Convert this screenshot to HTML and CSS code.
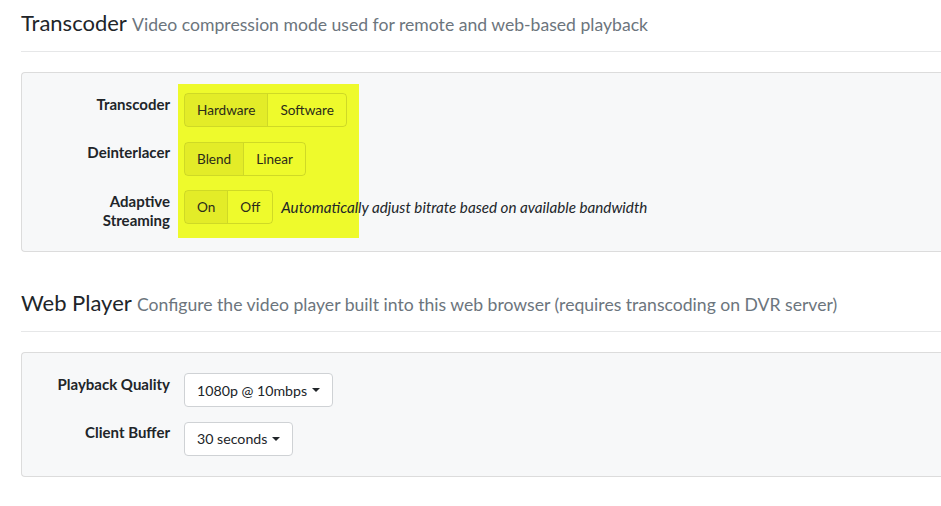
FILE: index.html
```html
<!DOCTYPE html>
<html>
<head>
<meta charset="utf-8">
<link rel="stylesheet" href="styles.css">
</head>
<body>
<div class="page">
  <section class="section">
    <h4 class="title">Transcoder <small class="muted">Video compression mode used for remote and web-based playback</small></h4>
    <hr class="rule">
    <div class="card">
      <div class="highlight"></div>
      <div class="row">
        <label class="label">Transcoder</label>
        <div class="control">
          <div class="btn-group">
            <span class="btn active">Hardware</span><span class="btn">Software</span>
          </div>
        </div>
      </div>
      <div class="row">
        <label class="label">Deinterlacer</label>
        <div class="control">
          <div class="btn-group">
            <span class="btn active">Blend</span><span class="btn">Linear</span>
          </div>
        </div>
      </div>
      <div class="row">
        <label class="label">Adaptive<br>Streaming</label>
        <div class="control">
          <div class="btn-group">
            <span class="btn active">On</span><span class="btn">Off</span>
          </div>
          <em class="help">Automatically adjust bitrate based on available bandwidth</em>
        </div>
      </div>
    </div>
  </section>
  <section class="section">
    <h4 class="title">Web Player <small class="muted">Configure the video player built into this web browser (requires transcoding on DVR server)</small></h4>
    <hr class="rule">
    <div class="card">
      <div class="row">
        <label class="label">Playback Quality</label>
        <div class="control">
          <span class="select">1080p @ 10mbps<span class="caret"></span></span>
        </div>
      </div>
      <div class="row">
        <label class="label">Client Buffer</label>
        <div class="control">
          <span class="select">30 seconds<span class="caret"></span></span>
        </div>
      </div>
    </div>
  </section>
</div>
</body>
</html>
```
FILE: styles.css
```css
html, body {
  margin: 0;
  padding: 0;
  background: #fff;
  overflow: hidden;
}
*, *::before, *::after {
  box-sizing: border-box;
}
body {
  font-family: Lato, "Open Sans", sans-serif;
  color: #212529;
  font-size: 14px;
}
.page {
  width: 941px;
  padding-left: 21px;
}
.section {
  margin-bottom: 28px;
}
.title {
  margin: 0;
  padding-top: 10px;
  font-size: 22px;
  font-weight: 400;
  line-height: 1.2;
  color: #212529;
}
.muted {
  font-size: 17.6px;
  color: #6c757d;
}
.rule {
  margin: 15px 0 20px 0;
  border: 0;
  border-top: 1px solid #e6e7e8;
}
.card {
  position: relative;
  background: #f7f8f9;
  border: 1px solid #dcdcdc;
  border-right: 0;
  border-radius: 4px 0 0 4px;
  padding: 20px 20px;
}
.highlight {
  position: absolute;
  left: 156px;
  top: 11px;
  width: 181px;
  height: 154px;
  background: #eefa2c;
}
.row {
  position: relative;
  display: flex;
  align-items: flex-start;
  gap: 14px;
}
.row + .row {
  margin-top: 14.5px;
}
.label {
  width: 128px;
  flex: none;
  text-align: right;
  font-weight: 700;
  font-size: 15px;
  line-height: 19.5px;
  padding-top: 1.5px;
}
.control {
  display: flex;
  align-items: center;
  gap: 8px;
}
.btn-group {
  display: inline-flex;
  height: 34px;
  border: 1px solid rgba(0, 0, 0, 0.13);
  border-radius: 4px;
  overflow: hidden;
}
.btn {
  display: inline-block;
  height: 32px;
  line-height: 32px;
  padding: 0 12px;
  font-size: 13.6px;
  color: #2b2b1a;
}
.btn + .btn {
  border-left: 1px solid rgba(0, 0, 0, 0.13);
}
.btn.active {
  background: rgba(80, 60, 0, 0.07);
}
.help {
  font-size: 15.2px;
  font-style: italic;
  color: #212529;
}
.select {
  display: inline-flex;
  align-items: center;
  height: 34px;
  padding: 0 12px;
  background: #fff;
  border: 1px solid #cfd2d5;
  border-radius: 4px;
  font-size: 14.2px;
  color: #212529;
}
.caret {
  display: inline-block;
  margin-left: 5px;
  width: 0;
  height: 0;
  border-left: 4px solid transparent;
  border-right: 4px solid transparent;
  border-top: 4.5px solid #212529;
}
```
